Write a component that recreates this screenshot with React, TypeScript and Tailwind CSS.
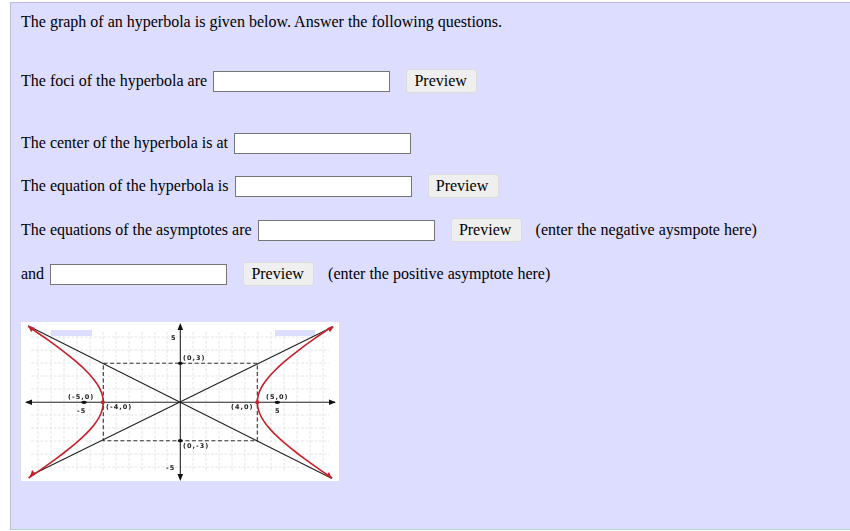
import React from 'react';

const serif = 'font-["Liberation_Serif",serif]';

const Answer = () => (
  <input type="text" className="w-[177px] h-[21px] bg-white border border-[#767676] shrink-0" />
);

const Preview = ({ className }: { className: string }) => (
  <button className={`h-6 w-[71px] shrink-0 pr-[2px] bg-[#efefef] border border-[#dcdcdc] rounded-[3px] text-base leading-none text-black ${className}`}>
    Preview
  </button>
);

const branch = (side: number) => {
  const pts: string[] = [];
  for (let i = -16; i <= 16; i++) {
    const t = (i / 16) * 1.3;
    pts.push(`${(159.3 + side * 77 * Math.cosh(t)).toFixed(1)},${(80.3 + 44.6 * Math.sinh(t)).toFixed(1)}`);
  }
  return pts.join(' ');
};

const gridX = [17, 30, 43, 56, 69, 82, 95, 108, 121, 134, 146, 172, 185, 198, 211, 224, 237, 250, 263, 276, 289, 302];
const gridY = [15, 28, 41, 54, 67, 93, 106, 119, 132, 145];

const labels: [string, number, number][] = [
  ['(0,3)', 162, 38],
  ['(0,-3)', 162, 125.5],
  ['(-5,0)', 47, 76.5],
  ['(-4,0)', 85, 87],
  ['(4,0)', 210, 87],
  ['(5,0)', 245, 76.5],
  ['-5', 56, 90.5],
  ['5', 254, 91],
  ['5', 150, 18],
  ['-5', 145, 148],
];

const Graph = () => (
  <svg width="318" height="159" viewBox="0 0 318 159" className="block bg-white blur-[0.5px]">
    <g stroke="#e6e6e6" strokeWidth="1" strokeDasharray="3 1.5">
      {gridX.map((x) => (
        <line key={x} x1={x} y1="10" x2={x} y2="150" />
      ))}
      {gridY.map((y) => (
        <line key={y} x1="10" y1={y} x2="308" y2={y} />
      ))}
    </g>
    <rect x="30" y="8" width="41" height="6" fill="#ddddff" />
    <rect x="254" y="8" width="40" height="6" fill="#ddddff" />
    <path d="M82.3 80V41.3H236.3V118.7H82.3V80" fill="none" stroke="#333" strokeWidth="1.1" strokeDasharray="4 2.5" />
    <g stroke="#222" strokeWidth="1.1">
      <line x1="7" y1="3.7" x2="311" y2="156.5" />
      <line x1="9" y1="153.7" x2="312" y2="4.7" />
      <line x1="5" y1="80.3" x2="314" y2="80.3" />
      <line x1="159.3" y1="3" x2="159.3" y2="157" />
    </g>
    <g fill="#111">
      <path d="M4 80.3L11 77.5V83.1Z" />
      <path d="M315 80.3L308 77.5V83.1Z" />
      <path d="M159.3 1L156.5 8H162.1Z" />
      <path d="M159.3 159L156.5 152H162.1Z" />
      <ellipse cx="63" cy="80.3" rx="2.8" ry="1.6" />
      <ellipse cx="256.3" cy="80.3" rx="2.8" ry="1.6" />
      <ellipse cx="159.3" cy="41.3" rx="2.5" ry="1.6" />
      <ellipse cx="159.3" cy="118.7" rx="2.5" ry="1.6" />
    </g>
    <g fill="none" stroke="#c8202a" strokeWidth="1.6">
      <polyline points={branch(-1)} />
      <polyline points={branch(1)} />
    </g>
    <g fill="#c8202a">
      <path d="M7 3.5L14 6L10 10Z" />
      <path d="M9 155L15 152L11 148Z" />
      <path d="M313 4.5L306 6L309 10Z" />
      <path d="M311 157L305 154L308 150Z" />
      <circle cx="81.8" cy="80.3" r="2" />
      <circle cx="236.3" cy="80.3" r="2" />
    </g>
    <g fill="#222" fontSize="6.5" fontWeight="700" letterSpacing="1" fontFamily="'DejaVu Sans', sans-serif">
      {labels.map(([text, x, y]) => (
        <text key={`${text}-${x}`} x={x} y={y}>
          {text}
        </text>
      ))}
    </g>
  </svg>
);

export default function App() {
  return (
    <div className={`bg-white h-[531px] w-[850px] overflow-hidden pt-[2px] pl-[10px] ${serif} text-base text-black`}>
      <div className="h-[528px] w-[840px] bg-[#ddddff] border-l border-t border-[#bbbbdd] border-b-[#b4d8c0] border-b pl-[10px] pt-[7px]">
        <div className="flex items-center h-6">The graph of an hyperbola is given below. Answer the following questions.</div>

        <div className="flex items-center h-6 mt-[35px]">
          <span className="mr-[6px]">The foci of the hyperbola are</span>
          <Answer />
          <Preview className="ml-4" />
        </div>

        <div className="flex items-center h-6 mt-[38px]">
          <span className="mr-[6px]">The center of the hyperbola is at</span>
          <Answer />
        </div>

        <div className="flex items-center h-6 mt-[19px]">
          <span className="mr-[6px]">The equation of the hyperbola is</span>
          <Answer />
          <Preview className="ml-4" />
        </div>

        <div className="flex items-center h-6 mt-5">
          <span className="mr-[6px]">The equations of the asymptotes are</span>
          <Answer />
          <Preview className="ml-4" />
          <span className="ml-[14px]">(enter the negative aysmpote here)</span>
        </div>

        <div className="flex items-center h-6 mt-5">
          <span className="mr-[6px]">and</span>
          <Answer />
          <Preview className="ml-4" />
          <span className="ml-[14px]">(enter the positive asymptote here)</span>
        </div>

        <div className="mt-9">
          <Graph />
        </div>
      </div>
    </div>
  );
}
